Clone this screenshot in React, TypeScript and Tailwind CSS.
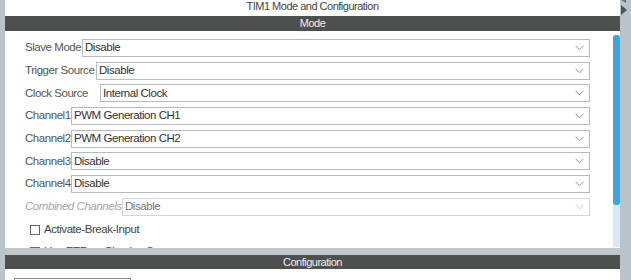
import React from "react";

type Row = { label: string; value: string; labelW: string; disabled?: boolean };

const ROWS: Row[] = [
  { label: "Slave Mode", value: "Disable", labelW: "w-[57px]" },
  { label: "Trigger Source", value: "Disable", labelW: "w-[71px]" },
  { label: "Clock Source", value: "Internal Clock", labelW: "w-[75px]" },
  { label: "Channel1", value: "PWM Generation CH1", labelW: "w-[46px]" },
  { label: "Channel2", value: "PWM Generation CH2", labelW: "w-[46px]" },
  { label: "Channel3", value: "Disable", labelW: "w-[46px]" },
  { label: "Channel4", value: "Disable", labelW: "w-[46px]" },
  { label: "Combined Channels", value: "Disable", labelW: "w-[97px]", disabled: true },
];

const CHECKS = ["Activate-Break-Input", "Use ETR as Clearing Source"];

function Chevron({ light }: { light?: boolean }) {
  return (
    <svg width="9" height="6" viewBox="0 0 9 6" className="shrink-0">
      <path
        d="M0.5 0.8 L4.5 4.8 L8.5 0.8"
        fill="none"
        stroke={light ? "#c8c8c8" : "#8e8e8e"}
        strokeWidth="1"
      />
    </svg>
  );
}

function SelectRow({ row }: { row: Row }) {
  return (
    <div className="flex h-[18px] shrink-0 items-center">
      <div
        className={`${row.labelW} shrink-0 whitespace-nowrap ${
          row.disabled ? "italic text-[#a6a6a6]" : "text-[#555]"
        }`}
      >
        {row.label}
      </div>
      <div
        className={`flex h-[18px] flex-1 items-center justify-between border pl-[2px] pr-[5px] ${
          row.disabled ? "border-[#d3d6d9] text-[#777]" : "border-[#b6bbbf] text-[#333]"
        }`}
      >
        <span className="whitespace-nowrap">{row.value}</span>
        <Chevron light={row.disabled} />
      </div>
    </div>
  );
}

export default function App() {
  return (
    <div className="flex h-[280px] w-[631px] overflow-hidden bg-[#b9c3c9] font-['Liberation_Sans',Arial,sans-serif] text-[11.5px] leading-none tracking-[-0.45px]">
      <div className="ml-[5px] flex w-[615px] shrink-0 flex-col">
        <div className="h-[16px] shrink-0 bg-white pt-[1px] text-center text-[11px] tracking-[-0.5px] text-[#444]">
          TIM1 Mode and Configuration
        </div>
        <div className="flex h-[15px] shrink-0 items-center justify-center bg-[#4e504f] text-[11px] tracking-[-0.5px] text-[#eee]">
          Mode
        </div>
        <div className="flex h-[217px] shrink-0 bg-white">
          <div className="flex flex-1 flex-col gap-[4.7px] overflow-hidden pt-[8px] pl-[20px] pr-[23px]">
            {ROWS.map((r) => (
              <SelectRow key={r.label} row={r} />
            ))}
            {CHECKS.map((c) => (
              <div key={c} className="flex h-[18px] shrink-0 items-center pl-[5px] text-[#444]">
                <div className="mr-[4px] h-[10px] w-[10px] border border-[#666] bg-white" />
                <span className="whitespace-nowrap">{c}</span>
              </div>
            ))}
          </div>
          <div className="mt-[4px] mb-[1px] w-[7px] rounded-t-[3px] bg-[#d8e8f5]">
            <div className="h-[170px] rounded-[3px] bg-[#39a6dd]" />
          </div>
        </div>
        <div className="h-[7px] shrink-0 bg-[#c1c8cc]" />
        <div className="flex h-[14px] shrink-0 items-center justify-center bg-[#4e504f] text-[11px] tracking-[-0.5px] text-[#eee]">
          Configuration
        </div>
        <div className="min-h-0 flex-1 overflow-hidden bg-white pt-[9px] pl-[9px]">
          <div className="h-[12px] w-[117px] border border-[#8b8b8b]" />
        </div>
      </div>
      <div className="flex-1">
        <svg width="11" height="18" viewBox="0 0 11 18">
          <polygon points="1,0 6,0 6,3 1,0" fill="#6c7378" />
          <polygon points="1,5 7,10 1,15" fill="#4f5559" />
        </svg>
      </div>
    </div>
  );
}
